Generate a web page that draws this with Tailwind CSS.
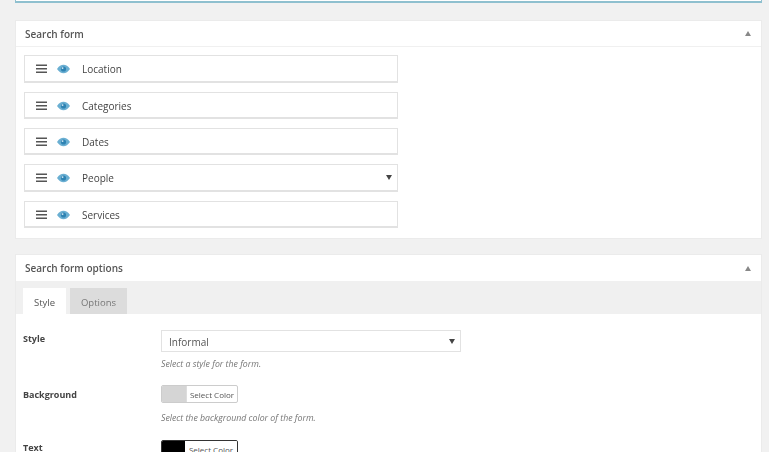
<!DOCTYPE html>
<html lang="en">

<head>
    <meta charset="UTF-8">
    <title>Search form</title>
    <script src="https://cdn.jsdelivr.net/npm/@tailwindcss/browser@4"></script>
</head>

<body class="bg-[#f1f1f1] overflow-hidden font-['Open_Sans',sans-serif] text-[#444]">
    <div class="h-[452px] overflow-hidden pl-[15px] pr-[7px] blur-[0.35px]">
        <!-- Notice -->
        <div class="h-[3px] bg-white border-b-2 border-x border-[#8fc0cf]"></div>

        <!-- Search form -->
        <div class="mt-[17px] bg-white border border-[#ebebeb] h-[219px]">
            <div class="h-[26px] flex items-center justify-between pl-[9px] pr-[10px] border-b border-[#f0f0f0] text-[10px] font-semibold text-[#555]">
                <span class="mt-[2px]">Search form</span>
                <span class="w-0 h-0 border-x-[3px] border-x-transparent border-b-[5px] border-b-[#888]"></span>
            </div>
            <div class="pl-2 pt-2 w-[382px] flex flex-col">
                <div class="h-[28px] flex items-center border border-[#e2e2e2] border-b-2 pl-[11px] text-[10px] text-[#444]">
                    <svg class="w-3 h-2.5" viewBox="0 0 12 10" fill="#555"><rect y="0.5" width="11" height="1.5"/><rect y="4" width="11" height="1.5"/><rect y="7.5" width="11" height="1.5"/></svg>
                    <svg class="ml-[9px] w-[13px] h-[10px]" viewBox="0 0 14 10"><path d="M0 5C2 2 4.500 0.500 7 0.500S12 2 14 5C12 8 9.500 9.500 7 9.500S2 8 0 5Z" fill="#6aafd2"/><circle cx="7" cy="5" r="2.800" fill="#2e83b3"/><circle cx="6" cy="4" r="1" fill="#d5e8f2"/></svg>
                    <span class="ml-3 mt-[2px]">Location</span>
                </div>
                <div class="mt-[9px] h-[27px] flex items-center border border-[#e2e2e2] border-b-2 pl-[11px] text-[10px] text-[#444]">
                    <svg class="mt-[2px] w-3 h-2.5" viewBox="0 0 12 10" fill="#555"><rect y="0.5" width="11" height="1.5"/><rect y="4" width="11" height="1.5"/><rect y="7.5" width="11" height="1.5"/></svg>
                    <svg class="mt-[2px] ml-[9px] w-[13px] h-[10px]" viewBox="0 0 14 10"><path d="M0 5C2 2 4.500 0.500 7 0.500S12 2 14 5C12 8 9.500 9.500 7 9.500S2 8 0 5Z" fill="#6aafd2"/><circle cx="7" cy="5" r="2.800" fill="#2e83b3"/><circle cx="6" cy="4" r="1" fill="#d5e8f2"/></svg>
                    <span class="ml-3 mt-[2px]">Categories</span>
                </div>
                <div class="mt-[9px] h-[27px] flex items-center border border-[#e2e2e2] border-b-2 pl-[11px] text-[10px] text-[#444]">
                    <svg class="mt-[2px] w-3 h-2.5" viewBox="0 0 12 10" fill="#555"><rect y="0.5" width="11" height="1.5"/><rect y="4" width="11" height="1.5"/><rect y="7.5" width="11" height="1.5"/></svg>
                    <svg class="mt-[2px] ml-[9px] w-[13px] h-[10px]" viewBox="0 0 14 10"><path d="M0 5C2 2 4.500 0.500 7 0.500S12 2 14 5C12 8 9.500 9.500 7 9.500S2 8 0 5Z" fill="#6aafd2"/><circle cx="7" cy="5" r="2.800" fill="#2e83b3"/><circle cx="6" cy="4" r="1" fill="#d5e8f2"/></svg>
                    <span class="ml-3 mt-[2px]">Dates</span>
                </div>
                <div class="mt-[9px] h-[28px] flex items-center border border-[#e2e2e2] border-b-2 pl-[11px] pr-[5px] text-[10px] text-[#444]">
                    <svg class="w-3 h-2.5" viewBox="0 0 12 10" fill="#555"><rect y="0.5" width="11" height="1.5"/><rect y="4" width="11" height="1.5"/><rect y="7.5" width="11" height="1.5"/></svg>
                    <svg class="ml-[9px] w-[13px] h-[10px]" viewBox="0 0 14 10"><path d="M0 5C2 2 4.500 0.500 7 0.500S12 2 14 5C12 8 9.500 9.500 7 9.500S2 8 0 5Z" fill="#6aafd2"/><circle cx="7" cy="5" r="2.800" fill="#2e83b3"/><circle cx="6" cy="4" r="1" fill="#d5e8f2"/></svg>
                    <span class="ml-3 mt-[2px]">People</span>
                    <span class="ml-auto w-0 h-0 border-x-[3px] border-x-transparent border-t-[5px] border-t-[#444]"></span>
                </div>
                <div class="mt-[9px] h-[27px] flex items-center border border-[#e2e2e2] border-b-2 pl-[11px] text-[10px] text-[#444]">
                    <svg class="mt-[2px] w-3 h-2.5" viewBox="0 0 12 10" fill="#555"><rect y="0.5" width="11" height="1.5"/><rect y="4" width="11" height="1.5"/><rect y="7.5" width="11" height="1.5"/></svg>
                    <svg class="mt-[2px] ml-[9px] w-[13px] h-[10px]" viewBox="0 0 14 10"><path d="M0 5C2 2 4.500 0.500 7 0.500S12 2 14 5C12 8 9.500 9.500 7 9.500S2 8 0 5Z" fill="#6aafd2"/><circle cx="7" cy="5" r="2.800" fill="#2e83b3"/><circle cx="6" cy="4" r="1" fill="#d5e8f2"/></svg>
                    <span class="ml-3 mt-[2px]">Services</span>
                </div>
            </div>
        </div>

        <!-- Search form options -->
        <div class="mt-[15px] bg-white border border-[#ebebeb] h-[220px]">
            <div class="h-[26px] flex items-center justify-between pl-[9px] pr-[10px] text-[10px] font-semibold text-[#555]">
                <span>Search form options</span>
                <span class="w-0 h-0 border-x-[3px] border-x-transparent border-b-[5px] border-b-[#888]"></span>
            </div>
            <div class="h-[33px] bg-[#f0f0f0] flex items-end pl-[7px] gap-1 text-[9.5px]">
                <div class="w-[43px] h-[26px] pt-[4px] bg-white flex items-center justify-center text-[#555]">Style</div>
                <div class="w-[57px] h-[26px] pt-[4px] bg-[#dcdcdc] flex items-center justify-center text-[#777]">Options</div>
            </div>

            <div class="pl-[7px] text-[9px]">
                <div class="flex pt-4">
                    <div class="w-[138px] font-bold text-[#444] leading-[17px]">Style</div>
                    <div>
                        <div class="w-[300px] h-[22px] border border-[#e2e2e2] flex items-center justify-between pl-[7px] pr-[5px] text-[10px] text-[#555]">
                            <span class="mt-[2px]">Informal</span>
                            <span class="w-0 h-0 border-x-[3px] border-x-transparent border-t-[5px] border-t-[#444]"></span>
                        </div>
                        <p class="mt-[5px] text-[8.75px] italic text-[#777] leading-[14px]">Select a style for the form.</p>
                    </div>
                </div>
                <div class="flex pt-[14px]">
                    <div class="w-[138px] pt-px font-bold text-[#444] leading-[18px]">Background</div>
                    <div>
                        <div class="w-[77px] h-[18px] border border-[#ccc] rounded-[2px] flex overflow-hidden">
                            <span class="w-[24px] bg-[#d5d5d5]"></span>
                            <span class="flex-1 pt-[2px] flex items-center justify-center text-[8px] text-[#555] border-l border-[#ddd]">Select Color</span>
                        </div>
                        <p class="mt-2 text-[8.75px] italic text-[#777] leading-[14px]">Select the background color of the form.</p>
                    </div>
                </div>
                <div class="flex pt-[15px]">
                    <div class="w-[138px] pt-px font-bold text-[#444] leading-[14px]">Text</div>
                    <div class="w-[77px] h-[18px] border border-[#333] rounded-[2px] flex overflow-hidden">
                        <span class="w-[23px] bg-black"></span>
                        <span class="flex-1 pt-[2px] flex items-center justify-center text-[8px] text-[#555] bg-white">Select Color</span>
                    </div>
                </div>
            </div>
        </div>
    </div>
</body>

</html>
